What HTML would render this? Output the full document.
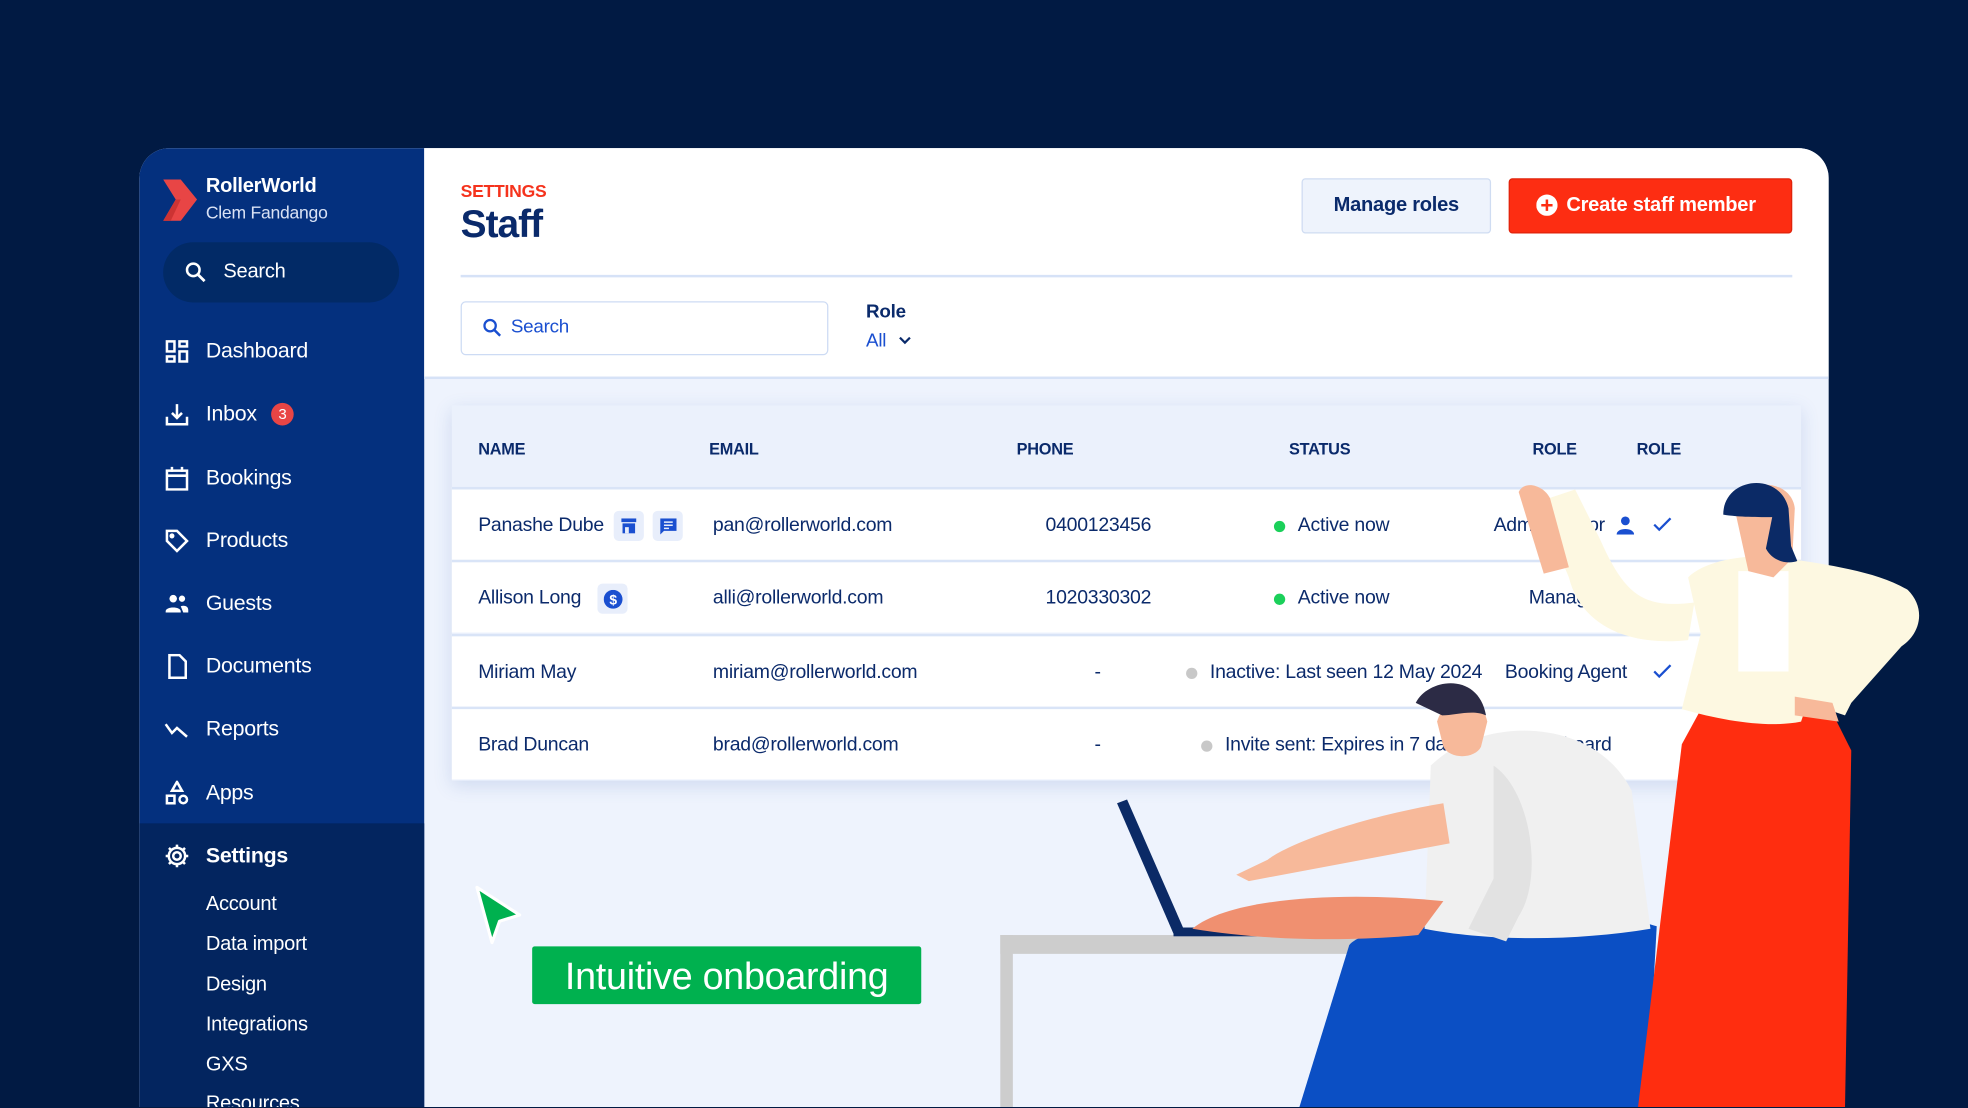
<!DOCTYPE html>
<html><head><meta charset="utf-8"><style>
*{margin:0;padding:0;box-sizing:border-box}
html,body{width:1968px;height:1108px;overflow:hidden;background:#011a43}
#w{position:absolute;left:0;top:0;width:1568px;height:882px;overflow:hidden;transform:scale(1.2551);transform-origin:0 0;font-family:"Liberation Sans",sans-serif;letter-spacing:-0.2px}
.a{position:absolute}
#card{left:111px;top:118px;width:1346px;height:764px;border-radius:24px 24px 0 0;overflow:hidden;background:#eef3fd}
#side{left:0;top:0;width:227px;height:765px;background:#04307e}
#side2{left:0;top:538px;width:227px;height:300px;background:#03255f}
.nav{position:absolute;left:53px;color:#fff;font-size:17px;line-height:20px}
.ic{position:absolute;left:20px;width:20px;height:20px}
.sub{position:absolute;left:53px;color:#fff;font-size:16px}
#main{left:227px;top:0;width:1119px;height:184px;background:#fff;border-bottom:2px solid #d6e2f7}
.th{position:absolute;top:27px;font-size:13px;font-weight:bold;color:#0a2a6b}
.row{position:absolute;left:0;width:1075px;height:58px;border-top:2px solid #d9e4f7;background:#fff}
.t{position:absolute;top:20px;font-size:15.5px;color:#0b2a6b;white-space:nowrap}
.dot{position:absolute;top:25px;width:9px;height:9px;border-radius:50%}
.chip{position:absolute;top:17px;width:24px;height:24px;background:#e8eefb;border-radius:4px}
</style></head><body><div id="w">
<div id="card" class="a">
 <div id="side" class="a"></div>
 <div id="side2" class="a"></div>
 <svg class="a" style="left:19px;top:25px" width="28" height="33" viewBox="0 0 28 33"><path d="M0 0h14l13 16-13 17H0l10-17z" fill="#e84545"/><path d="M10 16l4 0 -8 17H0z" fill="#c33"/></svg>
 <div class="a" style="left:53px;top:22px;color:#fff;font-size:16px;font-weight:bold">RollerWorld</div>
 <div class="a" style="left:53px;top:43px;color:#d9e2f5;font-size:14px">Clem Fandango</div>
 <div class="a" style="left:19px;top:75px;width:188px;height:48px;border-radius:24px;background:#022a66"></div>
 <svg class="a" style="left:36px;top:90px" width="18" height="18" viewBox="0 0 18 18"><circle cx="7" cy="7" r="5" stroke="#fff" stroke-width="2" fill="none"/><path d="M11 11l5 5" stroke="#fff" stroke-width="2.2"/></svg>
 <div class="a" style="left:67px;top:90px;color:#fff;font-size:16px">Search</div>

 <div class="nav" style="top:152px">Dashboard</div>
 <svg class="ic" style="top:152px" viewBox="0 0 20 20" fill="none" stroke="#fff" stroke-width="2"><rect x="2" y="2" width="6" height="8"/><rect x="12" y="2" width="6" height="4"/><rect x="2" y="14" width="6" height="4"/><rect x="12" y="10" width="6" height="8"/></svg>
 <div class="nav" style="top:202px">Inbox</div>
 <div class="a" style="left:105px;top:203px;width:18px;height:18px;border-radius:50%;background:#e84545;color:#fff;font-size:12px;text-align:center;line-height:18px">3</div>
 <svg class="ic" style="top:202px" viewBox="0 0 20 20" fill="none" stroke="#fff" stroke-width="2"><path d="M2 12v6h16v-6M10 2v11M6 9l4 4 4-4"/></svg>
 <div class="nav" style="top:253px">Bookings</div>
 <svg class="ic" style="top:253px" viewBox="0 0 20 20" fill="none" stroke="#fff" stroke-width="2"><rect x="2" y="4" width="16" height="15"/><path d="M2 8h16M6 1v4M14 1v4"/></svg>
 <div class="nav" style="top:303px">Products</div>
 <svg class="ic" style="top:303px" viewBox="0 0 20 20" fill="none" stroke="#fff" stroke-width="2"><path d="M2 2h8l8 8-8 8-8-8z"/><circle cx="6" cy="6" r="1"/></svg>
 <div class="nav" style="top:353px">Guests</div>
 <svg class="ic" style="top:353px" viewBox="0 0 20 20" fill="#fff"><circle cx="7" cy="6" r="3"/><circle cx="14" cy="6" r="2.5"/><path d="M1 16c0-4 12-4 12 0v1H1zM13 12c3-1 6 0 6 3v2h-4z"/></svg>
 <div class="nav" style="top:403px">Documents</div>
 <svg class="ic" style="top:403px" viewBox="0 0 20 20" fill="none" stroke="#fff" stroke-width="2"><path d="M4 1h8l5 5v13H4z"/></svg>
 <div class="nav" style="top:453px">Reports</div>
 <svg class="ic" style="top:453px" viewBox="0 0 20 20" fill="none" stroke="#fff" stroke-width="2"><path d="M1 6l5 7 4-4 8 7"/></svg>
 <div class="nav" style="top:504px">Apps</div>
 <svg class="ic" style="top:504px" viewBox="0 0 20 20" fill="none" stroke="#fff" stroke-width="2"><path d="M10 1l4 7H6z"/><rect x="2" y="12" width="6" height="6"/><circle cx="15" cy="15" r="3"/></svg>
 <div class="nav" style="top:554px;font-weight:bold">Settings</div>
 <svg class="ic" style="top:554px" viewBox="0 0 20 20" fill="none" stroke="#fff" stroke-width="2"><circle cx="10" cy="10" r="3"/><path d="M10 1v3M10 16v3M1 10h3M16 10h3M3.6 3.6l2.2 2.2M14.2 14.2l2.2 2.2M3.6 16.4l2.2-2.2M14.2 5.8l2.2-2.2"/><circle cx="10" cy="10" r="6.5"/></svg>
 <div class="sub" style="top:594px">Account</div>
 <div class="sub" style="top:626px">Data import</div>
 <div class="sub" style="top:658px">Design</div>
 <div class="sub" style="top:690px">Integrations</div>
 <div class="sub" style="top:722px">GXS</div>
 <div class="sub" style="top:753px">Resources</div>

 <div id="main" class="a">
  <div class="a" style="left:29px;top:26px;color:#f5331d;font-size:14px;font-weight:bold">SETTINGS</div>
  <div class="a" style="left:29px;top:43px;color:#0a2a6b;font-size:31px;font-weight:bold;letter-spacing:-0.8px">Staff</div>
  <div class="a" style="left:699px;top:24px;width:151px;height:44px;background:#eef3fc;border:1.5px solid #cfdcf2;border-radius:3px;color:#0a2a6b;font-size:16px;font-weight:bold;text-align:center;line-height:41px">Manage roles</div>
  <div class="a" style="left:864px;top:24px;width:226px;height:44px;background:#fd2d12;border:1.5px solid #e0230b;border-radius:3px;color:#fff;font-size:16px;font-weight:bold;line-height:41px;padding-left:45px">Create staff member</div>
  <svg class="a" style="left:886px;top:37px" width="17" height="17" viewBox="0 0 17 17"><circle cx="8.5" cy="8.5" r="8.5" fill="#fff"/><path d="M8.5 4v9M4 8.5h9" stroke="#fd2d12" stroke-width="2"/></svg>
  <div class="a" style="left:29px;top:101px;width:1061px;height:1.5px;background:#d6e2f7"></div>
  <div class="a" style="left:29px;top:122px;width:293px;height:43px;border:1.5px solid #cddbf4;border-radius:4px"></div>
  <svg class="a" style="left:46px;top:135px" width="16" height="16" viewBox="0 0 16 16"><circle cx="6.5" cy="6.5" r="4.5" stroke="#1a4fd0" stroke-width="1.8" fill="none"/><path d="M10 10l4.5 4.5" stroke="#1a4fd0" stroke-width="2"/></svg>
  <div class="a" style="left:69px;top:134px;color:#1a4fd0;font-size:15px">Search</div>
  <div class="a" style="left:352px;top:122px;color:#0a2a6b;font-size:15px;font-weight:bold">Role</div>
  <div class="a" style="left:352px;top:145px;color:#1a4fd0;font-size:15px">All</div>
  <svg class="a" style="left:378px;top:150px" width="10" height="7" viewBox="0 0 10 7"><path d="M1 1l4 4 4-4" stroke="#0a2a6b" stroke-width="1.8" fill="none"/></svg>
 </div>

 <div class="a" style="left:249px;top:205px;width:1075px;height:299px;background:#ebf1fc;box-shadow:0 4px 14px rgba(60,100,180,.18)">
  <div class="th" style="left:21px">NAME</div><div class="th" style="left:205px">EMAIL</div><div class="th" style="left:450px">PHONE</div><div class="th" style="left:667px">STATUS</div><div class="th" style="left:861px">ROLE</div><div class="th" style="left:944px">ROLE</div>
  <div class="row" style="top:65px">
   <div class="t" style="left:21px">Panashe Dube</div>
   <div class="chip" style="left:129px"></div><svg class="a" style="left:135px;top:23px" width="12" height="12" viewBox="0 0 12 12" fill="#1a4fd0"><rect x="0" y="0" width="12" height="3"/><rect x="1" y="4" width="10" height="8"/><rect x="3" y="7" width="3" height="5" fill="#e8eefb"/></svg>
   <div class="chip" style="left:160px"></div><svg class="a" style="left:166px;top:23px" width="13" height="13" viewBox="0 0 13 13" fill="#1a4fd0"><path d="M0 0h13v10H3l-3 3z"/><path d="M3 3h7M3 5.5h7M3 8h4" stroke="#e8eefb" stroke-width="1.2"/></svg>
   <div class="t" style="left:208px">pan@rollerworld.com</div>
   <div class="t" style="left:473px">0400123456</div>
   <div class="dot" style="left:655px;background:#1bd05a"></div><div class="t" style="left:674px">Active now</div>
   <div class="t" style="left:830px">Administrator</div>
   <svg class="a" style="left:928px;top:21px" width="14" height="15" viewBox="0 0 14 15" fill="#1a4fd0"><circle cx="7" cy="4" r="3.5"/><path d="M0 15c0-6 14-6 14 0z"/></svg>
   <svg class="a" style="left:957px;top:22px" width="15" height="12" viewBox="0 0 15 12"><path d="M1 6l4 4 9-9" stroke="#1a4fd0" stroke-width="1.8" fill="none"/></svg>
  </div>
  <div class="row" style="top:123px">
   <div class="t" style="left:21px">Allison Long</div>
   <div class="chip" style="left:116px"></div><svg class="a" style="left:121px;top:22px" width="15" height="15" viewBox="0 0 15 15"><circle cx="7.5" cy="7.5" r="7.5" fill="#1a4fd0"/><text x="7.5" y="11.5" font-size="11" font-weight="bold" fill="#fff" text-anchor="middle" font-family="Liberation Sans">$</text></svg>
   <div class="t" style="left:208px">alli@rollerworld.com</div>
   <div class="t" style="left:473px">1020330302</div>
   <div class="dot" style="left:655px;background:#1bd05a"></div><div class="t" style="left:674px">Active now</div>
   <div class="t" style="left:858px">Manager</div>
  </div>
  <div class="row" style="top:182px">
   <div class="t" style="left:21px">Miriam May</div>
   <div class="t" style="left:208px">miriam@rollerworld.com</div>
   <div class="t" style="left:512px">-</div>
   <div class="dot" style="left:585px;background:#c8c8c8"></div><div class="t" style="left:604px">Inactive: Last seen 12 May 2024</div>
   <div class="t" style="left:839px">Booking Agent</div>
   <svg class="a" style="left:957px;top:22px" width="15" height="12" viewBox="0 0 15 12"><path d="M1 6l4 4 9-9" stroke="#1a4fd0" stroke-width="1.8" fill="none"/></svg>
  </div>
  <div class="row" style="top:240px">
   <div class="t" style="left:21px">Brad Duncan</div>
   <div class="t" style="left:208px">brad@rollerworld.com</div>
   <div class="t" style="left:512px">-</div>
   <div class="dot" style="left:597px;background:#c8c8c8"></div><div class="t" style="left:616px">Invite sent: Expires in 7 days</div>
   <div class="t" style="left:850px">Dashboard</div>
  </div>
 </div>
</div>

<svg class="a" style="left:0;top:0" width="1568" height="882" viewBox="0 0 1568 882">
 <path d="M380 707l34 22-16 5-6 17z" fill="#00b14f" stroke="#fff" stroke-width="2.5" stroke-linejoin="round"/>
 <rect x="424" y="754" width="310" height="46" rx="2" fill="#00b14f"/>
 <text x="579" y="788" font-family="Liberation Sans" font-size="30" fill="#fff" text-anchor="middle">Intuitive onboarding</text>
 <rect x="797" y="745" width="325" height="15" fill="#cdcdcd"/>
 <rect x="797" y="745" width="10" height="140" fill="#cdcdcd"/>
 <rect x="1112" y="745" width="10" height="140" fill="#cdcdcd"/>
 <path d="M890 640l8-3 45 103-8 4z" fill="#0b2a66"/>
 <rect x="935" y="739" width="112" height="7" fill="#0b2a66"/>
 <path d="M1355 655c8 0 12 6 10 12l-30 160h-14z" fill="#f26552"/>
 <rect x="1170" y="818" width="170" height="17" rx="6" fill="#f26552"/>
 <path d="M1200 835l-12 50M1320 835l-10 50M1230 883l60-45" stroke="#5a1a12" stroke-width="4"/>
 <path d="M1035 883l40-130c20-25 200-30 245-15l-8 145z" fill="#0b4fc4"/>
 <path d="M1140 610c40-40 130-40 160 20l15 110c-60 10-130 10-180 0z" fill="#f0f0f0"/>
 <path d="M1150 640c-60 10-120 30-140 45l-25 12 10 5 160-30z" fill="#f7b99a"/>
 <path d="M950 740c30-25 120-30 200-22l-20 27c-50 5-120 5-180-5z" fill="#f09070"/>
 <path d="M1145 575c5-20 35-25 40 0l-5 20c-5 10-25 10-30 0z" fill="#f7b99a"/>
 <path d="M1128 560c10-20 50-25 56 10-10-5-25 0-35 0z" fill="#2c2b45"/>
 <path d="M1190 610c30 20 40 90 20 120l-10 20-30-10 20-40z" fill="#e2e2e2"/>
 <path d="M1305 883l35-290 30-55h75l30 60-5 285z" fill="#ff2d0f"/>
 <path d="M1370 535h75l3 12h-80z" fill="#c71f08"/>
 <path d="M1345 460c15-15 55-20 80-15 30 5 70 10 95 25 15 15 10 35-5 45l-40 45-5 10-30-10-5 15c-25 5-60 0-95-10l15-60z" fill="#fdf8e1"/>
 <path d="M1385 455h40v80h-40z" fill="#fff"/>
 <path d="M1225 400l25 60c10 40 50 55 95 50l5-30c-40 5-55-5-75-50l-20-40z" fill="#fdf8e1"/>
 <path d="M1210 392c5-10 20-5 25 5l15 55-20 5z" fill="#f7b99a"/>
 <path d="M1430 555l30 5 5 15-35-5z" fill="#f7b99a"/>
 <path d="M1382 405c5-25 45-25 48 0l-2 40-15 15-20-5z" fill="#f7b99a"/>
 <path d="M1373 410c0-30 45-35 52-5l2 30 5 12c-8 3-20 0-25-10l5-25c-10 0-27-0-39-2z" fill="#0b2a66"/>
</svg>
</div></body></html>
